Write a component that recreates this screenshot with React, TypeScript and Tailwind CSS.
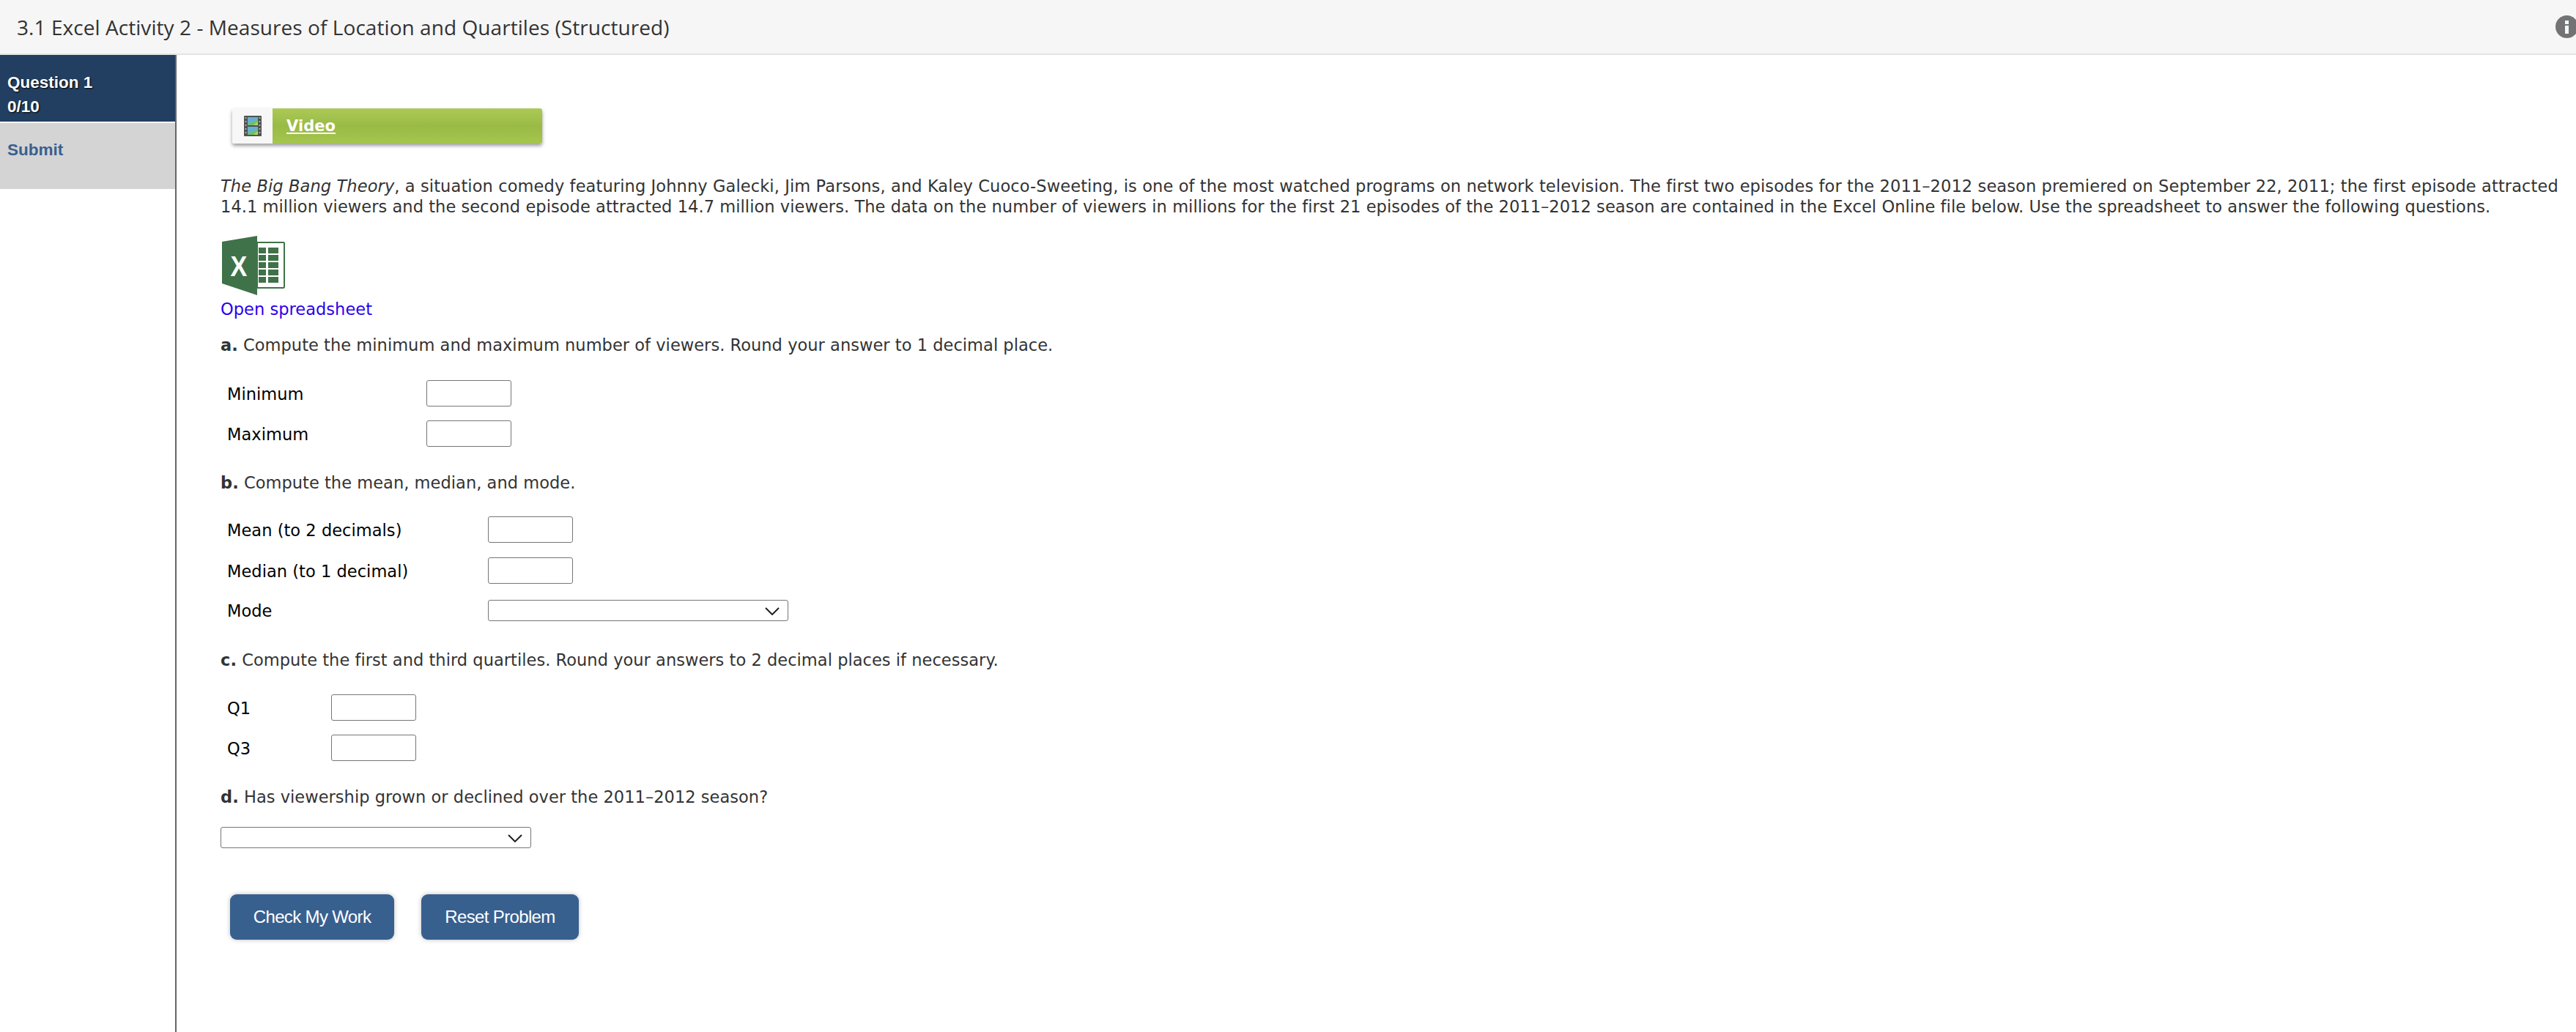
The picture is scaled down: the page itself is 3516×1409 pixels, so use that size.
import React from 'react';

const FilmIcon: React.FC = () => (
  <svg width="24" height="28" viewBox="0 0 24 28">
    <rect x="0" y="0" width="24" height="28" rx="1" fill="#4f5451" />
    <rect x="5" y="2" width="14" height="11" fill="#6fc06a" />
    <path d="M5 2h14v3L5 11z" fill="#66aed6" />
    <path d="M13 13l6-5v5z" fill="#b9d16a" />
    <rect x="5" y="15" width="14" height="11" fill="#6fc06a" />
    <path d="M5 15h14v3L5 24z" fill="#66aed6" />
    <path d="M13 26l6-5v5z" fill="#b9d16a" />
    <path d="M2.5 2v2M2.5 7v2M2.5 12v2M2.5 17v2M2.5 22v2M21.5 2v2M21.5 7v2M21.5 12v2M21.5 17v2M21.5 22v2" stroke="#a9adab" strokeWidth="2" />
  </svg>
);

const ExcelIcon: React.FC = () => (
  <svg width="86" height="81" viewBox="0 0 86 81" className="block">
    <path d="M48 9h36a1.500 1.500 0 0 1 1 1v60a1.500 1.500 0 0 1-1 1H48z" fill="#fff" stroke="#3f7249" strokeWidth="2" />
    <path d="M50 16h10v8H50zM63 16h14v8H63zM50 26h10v8H50zM63 26h14v8H63zM50 36h10v8H50zM63 36h14v8H63zM50 46h10v8H50zM63 46h14v8H63zM50 56h10v8H50zM63 56h14v8H63z" fill="#3f7249" />
    <path d="M0 8 48 0v81L0 65z" fill="#3f7249" />
    <text x="25.500" y="55" textAnchor="middle" fontFamily="Liberation Sans, sans-serif" fontWeight="700" fontSize="38" fill="#fff" transform="scale(0.9 1)">X</text>
  </svg>
);

const InfoIcon: React.FC = () => (
  <div className="w-[31px] h-[31px] shrink-0 -mr-[3px] rounded-full bg-[#737373] flex flex-col items-center justify-center gap-[2px]">
    <div className="w-[5px] h-[5px] bg-[#f2f7fb]" />
    <div className="w-[5px] h-[11px] bg-[#f2f7fb]" />
  </div>
);

const TextInput: React.FC = () => (
  <input type="text" className="block w-[116px] h-[36px] bg-white border border-[#767676] rounded-[3px]" />
);

const Dropdown: React.FC<{ className: string }> = ({ className }) => (
  <div className={`relative h-[29px] ${className}`}>
    <select className="block w-full h-full appearance-none bg-white border border-[#767676] rounded-[3px]">
      <option value=""></option>
    </select>
    <svg width="20" height="11" viewBox="0 0 20 11" className="absolute right-[12px] top-[10px]">
      <path d="M1 1l9 9 9-9" fill="none" stroke="#222" strokeWidth="2" />
    </svg>
  </div>
);

const Label: React.FC<{ text: string }> = ({ text }) => (
  <div className="pl-[9px] pt-[2px] flex items-center h-[36px] text-black">{text}</div>
);

const Step: React.FC<{ letter: string; text: string; className: string }> = ({ letter, text, className }) => (
  <p className={`h-[28px] ${className}`}>
    <b>{letter}</b> {text}
  </p>
);

const ActionButton: React.FC<{ text: string; className: string }> = ({ text, className }) => (
  <button className={`h-[62px] rounded-[9px] bg-[#38608f] text-white text-[24px] tracking-[-0.65px] font-['Liberation_Sans',Arial,sans-serif] shadow-[0_0_6px_rgba(0,0,0,0.25)] ${className}`}>
    {text}
  </button>
);

export default function App() {
  return (
    <div className="h-[1409px] flex flex-col overflow-hidden bg-white">
      <header className="h-[75px] shrink-0 flex items-center justify-between pl-[23px] bg-[#f6f6f6] border-b-2 border-[#e4e4e4] font-['Open_Sans',sans-serif] text-[28px] tracking-[0.06px] text-[#333]">
        <h1>3.1 Excel Activity 2 - Measures of Location and Quartiles (Structured)</h1>
        <InfoIcon />
      </header>

      <div className="flex-1 flex">
        <aside className="w-[241px] shrink-0 border-r-2 border-[#666] font-['Liberation_Sans',Arial,sans-serif] text-[22.5px] font-bold leading-[33px]">
          <div className="h-[91px] pt-[21px] pl-[10px] bg-[#223f61] text-white [text-shadow:1px_1px_2px_#000]">
            <div>Question 1</div>
            <div>0/10</div>
          </div>
          <div className="h-[90px] mt-[2px] pt-[20px] pl-[10px] bg-[#d4d4d4] text-[#38608f]">Submit</div>
        </aside>

        <main className="flex-1 pl-[60px] pt-[73px] font-['DejaVu_Sans',Verdana,sans-serif] text-[22.5px] leading-[28px] tracking-[0.04px] text-[#333]">
          <div className="ml-[16px] w-[423px] h-[48px] flex rounded-[3px] shadow-[0_3px_5px_rgba(0,0,0,0.4)] overflow-hidden">
            <div className="w-[55px] flex items-center justify-center bg-[#f7f7f7]">
              <FilmIcon />
            </div>
            <div className="flex-1 pl-[19px] flex items-center bg-gradient-to-b from-[#abc955] via-[#9aba46] to-[#a4c54e]">
              <a className="text-white text-[21px] font-bold underline">Video</a>
            </div>
          </div>

          <p className="mt-[44px] whitespace-nowrap">
            <span className="block tracking-[0.11px]">
              <i>The Big Bang Theory</i>, a situation comedy featuring Johnny Galecki, Jim Parsons, and Kaley Cuoco-Sweeting, is one of the most watched programs on network television. The first two episodes for the 2011–2012 season premiered on September 22, 2011; the first episode attracted
            </span>
            <span className="block tracking-[0.065px]">
              14.1 million viewers and the second episode attracted 14.7 million viewers. The data on the number of viewers in millions for the first 21 episodes of the 2011–2012 season are contained in the Excel Online file below. Use the spreadsheet to answer the following questions.
            </span>
          </p>

          <div className="mt-[26px] ml-[2px]">
            <ExcelIcon />
          </div>
          <a className="block mt-[5px] text-[#2a00ee]">Open spreadsheet</a>

          <Step letter="a." text="Compute the minimum and maximum number of viewers. Round your answer to 1 decimal place." className="mt-[21px]" />
          <div className="mt-[34px] grid grid-cols-[281px_auto] justify-start gap-y-[19px]">
            <Label text="Minimum" />
            <TextInput />
            <Label text="Maximum" />
            <TextInput />
          </div>

          <Step letter="b." text="Compute the mean, median, and mode." className="mt-[35px]" />
          <div className="mt-[32px] grid grid-cols-[365px_auto] justify-start gap-y-[20px]">
            <Label text="Mean (to 2 decimals)" />
            <TextInput />
            <Label text="Median (to 1 decimal)" />
            <TextInput />
          </div>
          <div className="mt-[22px] grid grid-cols-[365px_auto] grid-rows-[29px] justify-start items-center h-[29px]">
            <div className="pl-[9px] text-black">Mode</div>
            <Dropdown className="w-[410px]" />
          </div>

          <Step letter="c." text="Compute the first and third quartiles. Round your answers to 2 decimal places if necessary." className="mt-[39px]" />
          <div className="mt-[33px] grid grid-cols-[151px_auto] justify-start gap-y-[19px]">
            <Label text="Q1" />
            <TextInput />
            <Label text="Q3" />
            <TextInput />
          </div>

          <Step letter="d." text="Has viewership grown or declined over the 2011–2012 season?" className="mt-[35px]" />
          <Dropdown className="mt-[27px] w-[424px]" />

          <div className="mt-[63px] ml-[13px] flex gap-[37px]">
            <ActionButton text="Check My Work" className="w-[224px]" />
            <ActionButton text="Reset Problem" className="w-[215px]" />
          </div>
        </main>
      </div>
    </div>
  );
}
